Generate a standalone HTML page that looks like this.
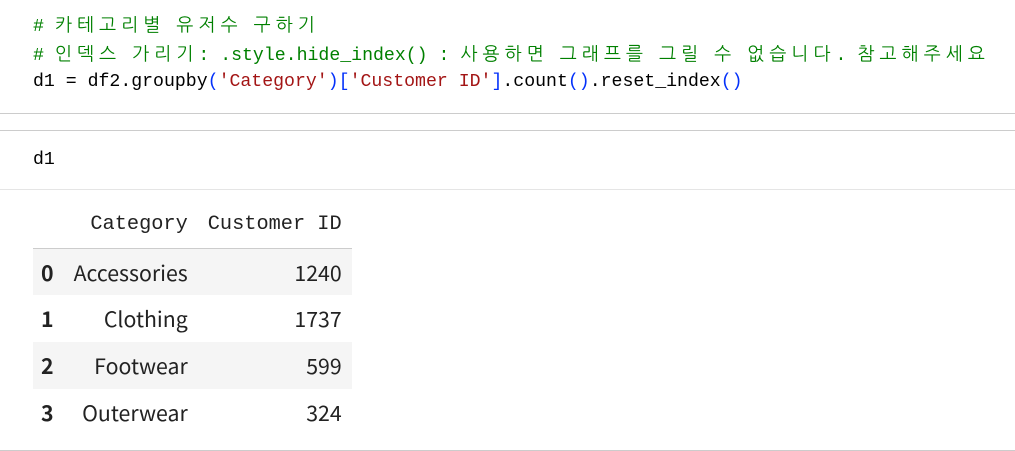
<!DOCTYPE html>
<html><head><meta charset="utf-8"><style>
body{margin:0;width:1015px;height:451px;background:#fff;overflow:hidden;position:relative;}
.mono{font-family:"Liberation Mono","NanumGothic","Noto Sans CJK KR",monospace;font-size:18.2px;white-space:pre;position:absolute;left:33px;}
.k{letter-spacing:5px;}
.c{color:#008000}.s{color:#a31515}.b{color:#0431fa}
.hr{position:absolute;left:0;width:1015px;height:1px;background:#ccc;}
table{position:absolute;left:33px;top:201px;border-collapse:collapse;font-family:"Noto Sans CJK KR","Liberation Sans",sans-serif;font-size:21.3px;color:#222;}
th{font-family:"Liberation Mono","NanumGothic",monospace;font-weight:normal;font-size:20.3px;height:47px;text-align:right;padding:0 10px 0 10px;border-bottom:1px solid #ccc;box-sizing:border-box;}
td{height:47px;text-align:right;padding:1px 10px 0 10px;line-height:1;box-sizing:border-box;}
td.i{font-weight:bold;text-align:left;padding-left:8px;padding-right:10px;}
tr.g td{background:#f5f5f5;}
</style></head><body>
<div class="mono c" style="top:13px"># <span class="k">카테고리별</span> <span class="k">유저수</span> <span class="k">구하기</span></div>
<div class="mono c" style="top:42px"># <span class="k">인덱스</span> <span class="k">가리기</span>: .style.hide_index() : <span class="k">사용하면</span> <span class="k">그래프를</span> <span class="k">그릴</span> <span class="k">수</span> <span class="k">없습니다</span>. <span class="k">참고해주세요</span></div>
<div class="mono" style="top:72px">d1 = df2.groupby<span class="b">(</span><span class="s">'Category'</span><span class="b">)[</span><span class="s">'Customer ID'</span><span class="b">]</span>.count<span class="b">()</span>.reset_index<span class="b">()</span></div>
<div class="hr" style="top:113px"></div>
<div class="hr" style="top:130px"></div>
<div class="mono" style="top:150px">d1</div>
<div class="hr" style="top:189px;background:#e5e5e5"></div>
<table>
<tr><th></th><th>Category</th><th>Customer ID</th></tr>
<tr class="g"><td class="i">0</td><td>Accessories</td><td>1240</td></tr>
<tr><td class="i">1</td><td>Clothing</td><td>1737</td></tr>
<tr class="g"><td class="i">2</td><td>Footwear</td><td>599</td></tr>
<tr><td class="i">3</td><td>Outerwear</td><td>324</td></tr>
</table>
<div class="hr" style="top:450px"></div>
</body></html>
